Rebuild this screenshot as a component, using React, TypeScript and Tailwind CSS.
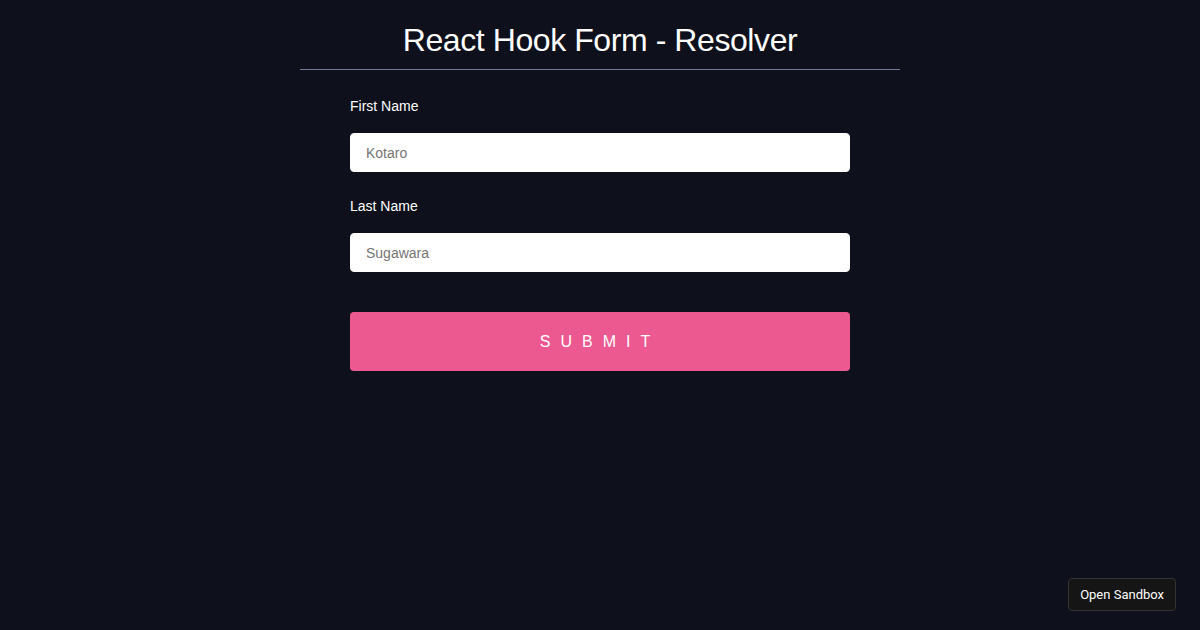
export default function App() {
  return (
    <div className="relative min-h-[630px] w-full bg-[#0e101c] font-['Liberation_Sans',Arial,sans-serif] text-white">
      <div className="mx-auto max-w-[600px] pt-[22px]">
        <h1 className="border-b border-[#6d7a9c] pb-[10px] text-center text-[32px] font-normal leading-[37px] tracking-[-0.42px] text-white">
          React Hook Form - Resolver
        </h1>
        <form className="mx-auto flex max-w-[500px] flex-col pt-[22px]" onSubmit={(e) => e.preventDefault()}>
          <label htmlFor="firstName" className="mb-[13px] block text-[14px] leading-[28px] text-white">
            First Name
          </label>
          <input
            id="firstName"
            placeholder="Kotaro"
            className="block h-[39px] w-full rounded-[4px] border border-white bg-white px-[15px] text-[14px] text-black outline-none placeholder:text-[#757575]"
          />
          <label htmlFor="lastName" className="mb-[13px] mt-[20px] block text-[14px] leading-[28px] text-white">
            Last Name
          </label>
          <input
            id="lastName"
            placeholder="Sugawara"
            className="block h-[39px] w-full rounded-[4px] border border-white bg-white px-[15px] text-[14px] text-black outline-none placeholder:text-[#757575]"
          />
          <button
            type="submit"
            className="mt-[40px] h-[59px] w-full rounded-[4px] bg-[#ec5990] text-[16px] font-normal uppercase tracking-[10px] text-white"
          >
            Submit
          </button>
        </form>
      </div>
      <button className="absolute bottom-[19px] right-[24px] h-[33px] rounded-[4px] border border-[#333] bg-[#151515] px-[11px] font-['Roboto',sans-serif] text-[13px] text-white">
        Open Sandbox
      </button>
    </div>
  );
}
